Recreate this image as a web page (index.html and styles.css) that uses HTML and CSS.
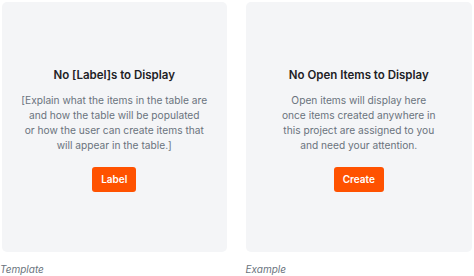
FILE: index.html
```html
<!DOCTYPE html>
<html lang="en">
<head>
    <meta charset="UTF-8">
    <meta name="viewport" content="width=device-width, initial-scale=1.0">
    <title>Empty State</title>
    <link rel="stylesheet" href="styles.css">
</head>
<body>
    <div class="states">
        <div class="state">
            <div class="card">
                <h2 class="card-title">No [Label]s to Display</h2>
                <p class="card-text">[Explain what the items in the table are<br>and how the table will be populated<br>or how the user can create items that<br>will appear in the table.]</p>
                <button class="card-button">Label</button>
            </div>
            <div class="caption">Template</div>
        </div>
        <div class="state">
            <div class="card">
                <h2 class="card-title">No Open Items to Display</h2>
                <p class="card-text">Open items will display here<br>once items created anywhere in<br>this project are assigned to you<br>and need your attention.</p>
                <button class="card-button">Create</button>
            </div>
            <div class="caption">Example</div>
        </div>
    </div>
</body>
</html>
```

FILE: styles.css
```css
body {
    margin: 0;
    padding: 0;
    background-color: #fff;
    font-family: 'Inter', 'Noto Sans', sans-serif;
}
.states {
    display: flex;
    gap: 19px;
    padding: 2px 2px 0 2px;
}
.state {
    width: 225px;
}
.state + .state {
    width: 227px;
}
.card {
    height: 250px;
    box-sizing: border-box;
    background-color: #f4f5f7; /* light gray panel */
    border-radius: 5px;
    display: flex;
    flex-direction: column;
    align-items: center;
    justify-content: center;
    padding: 4px 12px 0;
    text-align: center;
}
.card-title {
    margin: 0 0 10px;
    font-size: 11.5px;
    line-height: 16px;
    font-weight: 600;
    color: #1d2125;
}
.card-text {
    margin: 0 0 14px;
    font-size: 10.2px;
    line-height: 15px;
    color: #6a737d;
}
.card-button {
    height: 25px;
    padding: 0 9px;
    border: none;
    border-radius: 3px;
    background-color: #ff5200; /* orange */
    color: #fff;
    font-family: inherit;
    font-size: 10px;
    font-weight: 600;
}
.caption {
    margin-top: 11px;
    font-size: 10px;
    font-style: italic;
    color: #6a737d;
}
.state:first-child .caption {
    margin-left: -2px;
}
```
